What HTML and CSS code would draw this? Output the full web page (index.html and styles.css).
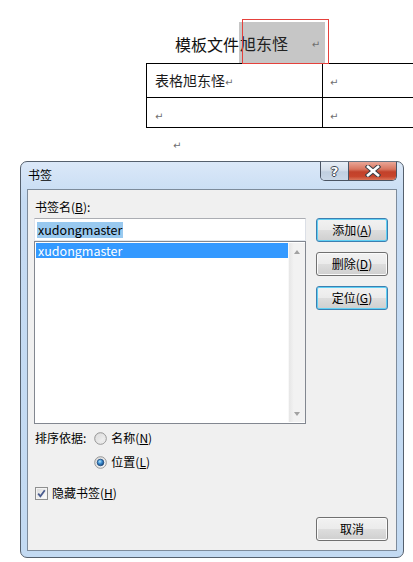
FILE: index.html
```html
<!DOCTYPE html>
<html lang="zh-CN">
<head>
<meta charset="utf-8">
<title>书签</title>
<link rel="stylesheet" href="styles.css">
</head>
<body>
<div class="doc">
  <div class="heading">
    <span class="h-text">模板文件</span>
    <span class="hl"><span class="h-text">旭东怪</span><span class="pm hl-pm">↵</span></span>
  </div>
  <div class="sel-rect"></div>
  <table class="doc-table">
    <tr class="r1">
      <td class="c1"><span class="t-text">表格旭东怪</span><span class="pm">↵</span></td>
      <td class="c2"><span class="pm low">↵</span></td>
    </tr>
    <tr class="r2">
      <td class="c1"><span class="pm low">↵</span></td>
      <td class="c2"><span class="pm low">↵</span></td>
    </tr>
  </table>
  <div class="after"><span class="pm">↵</span></div>
</div>

<div class="dialog">
  <div class="titlebar">
    <span class="title">书签</span>
    <div class="caption-btns">
      <span class="cap help">?</span>
      <span class="cap close">
        <svg width="16" height="12" viewBox="0 0 16 12">
          <path d="M3 1.8 L13 10.2 M13 1.8 L3 10.2" stroke="#3b3f47" stroke-width="4.6" stroke-linecap="square" fill="none"/>
          <path d="M3 1.8 L13 10.2 M13 1.8 L3 10.2" stroke="#ffffff" stroke-width="2.6" stroke-linecap="square" fill="none"/>
        </svg>
      </span>
    </div>
  </div>
  <div class="panel">
    <div class="label">书签名(<u>B</u>):</div>
    <div class="main">
      <div class="left">
        <div class="input"><span class="sel-text">xudongmaster</span></div>
        <div class="list">
          <div class="items">
            <div class="item selected">xudongmaster</div>
          </div>
          <div class="vscroll">
            <span class="arr up"></span>
            <span class="arr down"></span>
          </div>
        </div>
      </div>
      <div class="buttons">
        <div class="btn default">添加(<u>A</u>)</div>
        <div class="btn">删除(<u>D</u>)</div>
        <div class="btn default">定位(<u>G</u>)</div>
      </div>
    </div>
    <div class="sort">
      <span class="sort-label">排序依据:</span>
      <span class="radio">
        <svg width="13" height="13" viewBox="0 0 13 13">
          <defs>
            <linearGradient id="rg1" x1="0" y1="0" x2="1" y2="1">
              <stop offset="0" stop-color="#d4d4d4"/>
              <stop offset="1" stop-color="#fbfbfb"/>
            </linearGradient>
          </defs>
          <circle cx="6.5" cy="6.5" r="5.8" fill="url(#rg1)" stroke="#959595" stroke-width="1"/>
          <circle cx="6.5" cy="6.5" r="4" fill="none" stroke="#e6e6e6" stroke-width="1"/>
        </svg>
        <span>名称(<u>N</u>)</span>
      </span>
      <span class="radio second">
        <svg width="13" height="13" viewBox="0 0 13 13">
          <defs>
            <linearGradient id="rg2" x1="0" y1="0" x2="1" y2="1">
              <stop offset="0" stop-color="#d4d4d4"/>
              <stop offset="1" stop-color="#fbfbfb"/>
            </linearGradient>
            <radialGradient id="dot" cx="0.4" cy="0.35" r="0.7">
              <stop offset="0" stop-color="#b6e6fb"/>
              <stop offset="0.45" stop-color="#3d8fd3"/>
              <stop offset="1" stop-color="#143f72"/>
            </radialGradient>
          </defs>
          <circle cx="6.5" cy="6.5" r="5.8" fill="url(#rg2)" stroke="#959595" stroke-width="1"/>
          <circle cx="6.5" cy="6.5" r="3.3" fill="url(#dot)" stroke="#1d4a7d" stroke-width="0.8"/>
        </svg>
        <span>位置(<u>L</u>)</span>
      </span>
    </div>
    <div class="check">
      <svg width="13" height="13" viewBox="0 0 13 13">
        <defs>
          <linearGradient id="cg" x1="0" y1="0" x2="1" y2="1">
            <stop offset="0" stop-color="#dcdcdc"/>
            <stop offset="1" stop-color="#fdfdfd"/>
          </linearGradient>
        </defs>
        <rect x="0.5" y="0.5" width="12" height="12" fill="#f4f4f4" stroke="#8e8f8f"/>
        <rect x="2" y="2" width="9" height="9" fill="url(#cg)"/>
        <path d="M3.2 6.6 L5.4 9.3 L9.8 3.2" stroke="#4a5c8f" stroke-width="1.8" fill="none"/>
      </svg>
      <span>隐藏书签(<u>H</u>)</span>
    </div>
    <div class="footer">
      <div class="btn">取消</div>
    </div>
  </div>
</div>
</body>
</html>
```

FILE: styles.css
```css
html, body {
  margin: 0;
  padding: 0;
}

body {
  width: 413px;
  height: 562px;
  overflow: hidden;
  background: #ffffff;
  font-family: "Noto Sans CJK SC", "Noto Sans", sans-serif;
  color: #000;
}

/* ---------- document ---------- */
.doc {
  position: relative;
  height: 161px;
  overflow: hidden;
}

.heading {
  display: flex;
  height: 41px;
  padding-top: 22px;
  padding-left: 175px;
}

.h-text {
  font-size: 16px;
  line-height: 41px;
  padding-top: 2px;
  color: #111;
}

.hl {
  display: flex;
  align-items: center;
  width: 86px;
  height: 41px;
  box-sizing: border-box;
  padding: 0 5px 0 1px;
  background: #c6c6c6;
}

.hl .h-text {
  color: #222;
}

.hl-pm {
  margin-left: auto;
  padding-top: 3px;
}

.pm {
  font-family: "DejaVu Sans", sans-serif;
  font-size: 10px;
  color: #6e6e6e;
}

.pm.low {
  display: inline-block;
  padding-top: 5px;
}

.sel-rect {
  position: absolute;
  left: 242px;
  top: 19px;
  width: 87px;
  height: 45px;
  box-sizing: border-box;
  border: 1px solid #e5413c;
}

.doc-table {
  margin-left: 146px;
  border-collapse: collapse;
  table-layout: fixed;
  width: 330px;
}

.doc-table td {
  border: 1px solid #000;
  vertical-align: top;
  padding: 3px 8px 0 8px;
  box-sizing: border-box;
}

.doc-table .c1 {
  width: 176px;
}

.doc-table .c2 {
  width: 154px;
  padding-left: 7px;
}

.doc-table .r1 td {
  height: 34px;
}

.doc-table .r2 td {
  height: 30px;
}

.t-text {
  font-size: 14px;
  line-height: 18px;
  color: #1a1a1a;
}

.after {
  padding-left: 173px;
  padding-top: 2px;
}

/* ---------- dialog ---------- */
.dialog {
  margin-left: 20px;
  width: 384px;
  height: 397px;
  box-sizing: border-box;
  border: 1px solid #55606d;
  border-radius: 7px;
  padding: 0 6px 6px 6px;
  background: linear-gradient(#dbe8f8 0px, #cfe1f5 20px, #c5dbf3 40px, #c3daf2 100%);
  font-size: 12px;
  display: flex;
  flex-direction: column;
}

.titlebar {
  height: 27px;
  display: flex;
  justify-content: space-between;
  align-items: flex-start;
}

.title {
  margin-left: 1px;
  line-height: 26px;
  font-size: 12px;
}

.caption-btns {
  display: flex;
  margin-top: -1px;
  height: 20px;
  box-sizing: border-box;
  border: 1px solid #4a5463;
  border-top-color: #6a7584;
  border-radius: 0 0 5px 5px;
  overflow: hidden;
}

.cap {
  display: flex;
  align-items: center;
  justify-content: center;
  height: 100%;
}

.help {
  width: 27px;
  border-right: 1px solid #4a5463;
  background: linear-gradient(#e7eef6 0%, #d5dfeb 45%, #c0cfe0 55%, #c9d7e7 100%);
  color: #ffffff;
  font-family: "DejaVu Sans", sans-serif;
  font-weight: bold;
  font-size: 13px;
  line-height: 1;
  text-shadow: -1px 0 #3c4350, 1px 0 #3c4350, 0 -1px #3c4350, 0 1px #3c4350;
}

.close {
  width: 47px;
  background: linear-gradient(#e9a697 0%, #d8755f 40%, #c2412a 55%, #c7452c 80%, #d9765b 100%);
}

.panel {
  flex: 1;
  box-sizing: border-box;
  border: 1px solid #7d8b9b;
  background: #f0f0f0;
  padding: 9px 8px 9px 6px;
  display: flex;
  flex-direction: column;
}

.label {
  line-height: 16px;
  padding-left: 1px;
}

.main {
  display: grid;
  grid-template-columns: 272px 72px;
  column-gap: 10px;
  margin-top: 3px;
}

.left {
  display: flex;
  flex-direction: column;
}

.input {
  height: 23px;
  box-sizing: border-box;
  border: 1px solid;
  border-color: #abadb3 #dbdfe6 #e3e9ef #e2e3ea;
  background: #ffffff;
  padding-left: 2px;
  display: flex;
  align-items: center;
}

.sel-text {
  background: #99c9ef;
  font-size: 12.5px;
  line-height: 16px;
  padding: 0 1px;
}

.list {
  height: 183px;
  box-sizing: border-box;
  border: 1px solid #828790;
  background: #ffffff;
  padding: 1px 0 1px 1px;
  display: flex;
}

.items {
  flex: 1;
}

.item {
  height: 15px;
  line-height: 15px;
  padding-left: 2px;
  font-size: 12.5px;
}

.item.selected {
  background: #3399ff;
  color: #ffffff;
}

.vscroll {
  width: 17px;
  background: linear-gradient(to right, #e6e6e6, #f2f2f2 30%, #f2f2f2 100%);
  border-left: 1px solid #f8f8f8;
  display: flex;
  flex-direction: column;
  justify-content: space-between;
  align-items: center;
  padding: 7px 0 6px;
  box-sizing: border-box;
}

.arr {
  width: 0;
  height: 0;
  border-left: 3.5px solid transparent;
  border-right: 3.5px solid transparent;
}

.arr.up {
  border-bottom: 4px solid #a2a2a2;
}

.arr.down {
  border-top: 4px solid #a2a2a2;
}

.buttons {
  display: flex;
  flex-direction: column;
  gap: 10px;
}

.btn {
  height: 24px;
  width: 72px;
  box-sizing: border-box;
  border: 1px solid #707070;
  border-radius: 3px;
  background: linear-gradient(#f2f2f2 0%, #ebebeb 48%, #dddddd 52%, #cfcfcf 100%);
  box-shadow: inset 0 0 0 1px #fbfbfb;
  display: flex;
  align-items: center;
  justify-content: center;
  font-size: 12px;
  line-height: 16px;
}

.btn.default {
  border-color: #3c7fb1;
  box-shadow: inset 0 0 0 1px #60d0f4;
}

.sort {
  display: grid;
  grid-template-columns: auto auto;
  justify-content: start;
  column-gap: 8px;
  row-gap: 8px;
  margin-top: 6px;
  padding-left: 1px;
  line-height: 16px;
}

.radio {
  display: flex;
  align-items: center;
  gap: 4px;
}

.radio.second {
  grid-column: 2;
}

.check {
  display: flex;
  align-items: center;
  gap: 4px;
  margin-top: 15px;
  padding-left: 1px;
  line-height: 16px;
}

.footer {
  margin-top: auto;
  display: flex;
  justify-content: flex-end;
}
```
